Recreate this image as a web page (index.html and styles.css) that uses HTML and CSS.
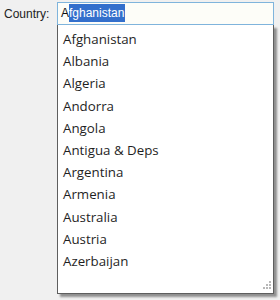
FILE: index.html
```html
<!DOCTYPE html>
<html>
<head>
    <meta charset="UTF-8">
    <title>Country</title>
    <link rel="stylesheet" href="styles.css">
</head>
<body>
<div class="field">
    <label class="label">Country:</label>
    <div class="combo">
        <div class="input">A<span class="sel">fghanistan</span></div>
        <ul class="list">
            <li>Afghanistan</li>
            <li>Albania</li>
            <li>Algeria</li>
            <li>Andorra</li>
            <li>Angola</li>
            <li>Antigua &amp; Deps</li>
            <li>Argentina</li>
            <li>Armenia</li>
            <li>Australia</li>
            <li>Austria</li>
            <li>Azerbaijan</li>
        </ul>
        <svg class="grip" width="12" height="12" viewBox="0 0 12 12">
            <rect x="9" y="1" width="2" height="2" fill="#b8b8b8"/>
            <rect x="6" y="4" width="2" height="2" fill="#b8b8b8"/>
            <rect x="9" y="4" width="2" height="2" fill="#b8b8b8"/>
            <rect x="3" y="7" width="2" height="2" fill="#b8b8b8"/>
            <rect x="6" y="7" width="2" height="2" fill="#b8b8b8"/>
            <rect x="9" y="7" width="2" height="2" fill="#b8b8b8"/>
        </svg>
    </div>
</div>
</body>
</html>
```

FILE: styles.css
```css
* {
    margin: 0;
    padding: 0;
    box-sizing: border-box;
}

body {
    background: #f0f0f0;
    font-family: "Open Sans", "Noto Sans", sans-serif;
    color: #1e1e1e;
    height: 300px;
    overflow: hidden;
}

ul, li {
    list-style: none;
}

.field {
    display: flex;
    align-items: flex-start;
    padding: 2px 0 0 4px;
}

.label {
    font-family: "Liberation Sans", Arial, sans-serif;
    font-size: 12px;
    line-height: 24px;
    width: 53px;
    color: #222;
}

.combo {
    position: relative;
    width: 217px;
}

.input {
    height: 23px;
    border: 1px solid #7fb4dc;
    background: #fdfdf8;
    font-family: "Liberation Sans", Arial, sans-serif;
    font-size: 12px;
    line-height: 21px;
    padding-left: 3px;
    color: #111;
}

.sel {
    background: #336fcc;
    color: #fff;
    padding: 2px 1px 2px 0;
}

.list {
    height: 269px;
    background: #fff;
    border: 1px solid #5e5e5e;
    border-top: none;
    box-shadow: 3px 3px 2px rgba(0, 0, 0, 0.4);
    padding: 3px 0 0 5px;
}

.list li {
    font-size: 13.3px;
    line-height: 22.2px;
    color: #1f1f1f;
}

.grip {
    position: absolute;
    right: 2px;
    bottom: 2px;
}
```
